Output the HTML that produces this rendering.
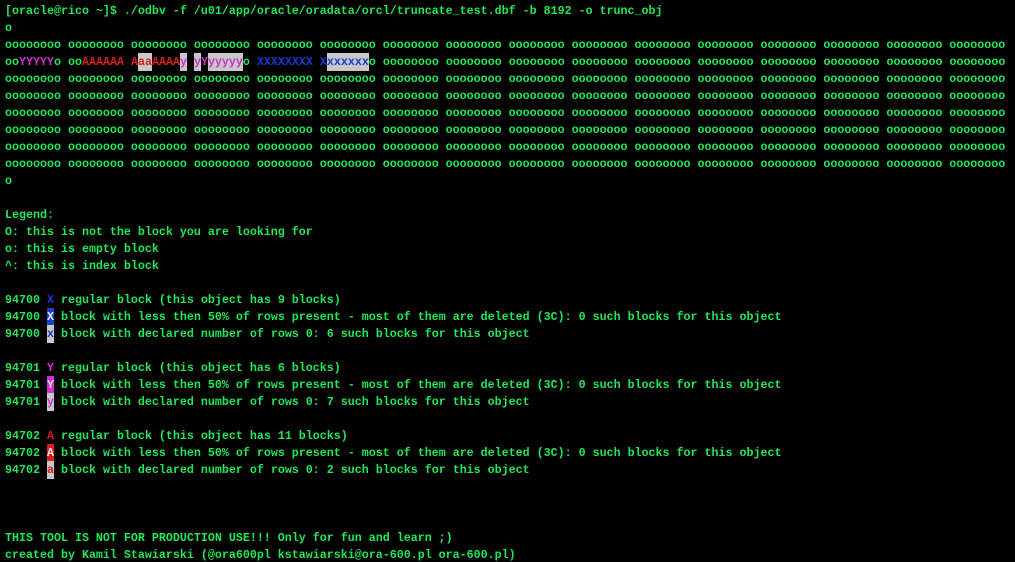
<!DOCTYPE html>
<html><head><meta charset="utf-8"><style>
html,body{margin:0;padding:0;background:#000;width:1015px;height:562px;overflow:hidden}
pre{margin:0;padding:3px 0 0 5px;font-family:"Liberation Mono",monospace;font-size:11.67px;line-height:17px;color:#22e65a;font-weight:bold;letter-spacing:0}
.r{color:#d81c1c}.m{color:#cc33cc}.b{color:#1a35d0}
.g{background:#c8c8c8}
.g,.bb,.mb,.rb{padding:2px 0}
.bb{background:#1a3fc8;color:#e8e8ff}.mb{background:#cc33cc;color:#f0d0f0}.rb{background:#d81c1c;color:#f5e0e0}
</style></head><body><pre>[oracle@rico ~]$ ./odbv -f /u01/app/oracle/oradata/orcl/truncate_test.dbf -b 8192 -o trunc_obj
o
oooooooo oooooooo oooooooo oooooooo oooooooo oooooooo oooooooo oooooooo oooooooo oooooooo oooooooo oooooooo oooooooo oooooooo oooooooo oooooooo
oo<span class="m">YYYYY</span>o oo<span class="r">AAAAAA</span> <span class="r">A<span class="g">aa</span>AAAA</span><span class="m g">y</span> <span class="m"><span class="g">y</span>Y<span class="g">yyyyy</span></span>o <span class="b">XXXXXXXX</span> <span class="b">X<span class="g">xxxxxx</span></span>o oooooooo oooooooo oooooooo oooooooo oooooooo oooooooo oooooooo oooooooo oooooooo oooooooo
oooooooo oooooooo oooooooo oooooooo oooooooo oooooooo oooooooo oooooooo oooooooo oooooooo oooooooo oooooooo oooooooo oooooooo oooooooo oooooooo
oooooooo oooooooo oooooooo oooooooo oooooooo oooooooo oooooooo oooooooo oooooooo oooooooo oooooooo oooooooo oooooooo oooooooo oooooooo oooooooo
oooooooo oooooooo oooooooo oooooooo oooooooo oooooooo oooooooo oooooooo oooooooo oooooooo oooooooo oooooooo oooooooo oooooooo oooooooo oooooooo
oooooooo oooooooo oooooooo oooooooo oooooooo oooooooo oooooooo oooooooo oooooooo oooooooo oooooooo oooooooo oooooooo oooooooo oooooooo oooooooo
oooooooo oooooooo oooooooo oooooooo oooooooo oooooooo oooooooo oooooooo oooooooo oooooooo oooooooo oooooooo oooooooo oooooooo oooooooo oooooooo
oooooooo oooooooo oooooooo oooooooo oooooooo oooooooo oooooooo oooooooo oooooooo oooooooo oooooooo oooooooo oooooooo oooooooo oooooooo oooooooo
o

Legend:
O: this is not the block you are looking for
o: this is empty block
^: this is index block

94700 <span class="b">X</span> regular block (this object has 9 blocks)
94700 <span class="bb">X</span> block with less then 50% of rows present - most of them are deleted (3C): 0 such blocks for this object
94700 <span class="b g">x</span> block with declared number of rows 0: 6 such blocks for this object

94701 <span class="m">Y</span> regular block (this object has 6 blocks)
94701 <span class="mb">Y</span> block with less then 50% of rows present - most of them are deleted (3C): 0 such blocks for this object
94701 <span class="m g">y</span> block with declared number of rows 0: 7 such blocks for this object

94702 <span class="r">A</span> regular block (this object has 11 blocks)
94702 <span class="rb">A</span> block with less then 50% of rows present - most of them are deleted (3C): 0 such blocks for this object
94702 <span class="r g">a</span> block with declared number of rows 0: 2 such blocks for this object



THIS TOOL IS NOT FOR PRODUCTION USE!!! Only for fun and learn ;)
created by Kamil Stawiarski (@ora600pl kstawiarski@ora-600.pl ora-600.pl)</pre></body></html>
